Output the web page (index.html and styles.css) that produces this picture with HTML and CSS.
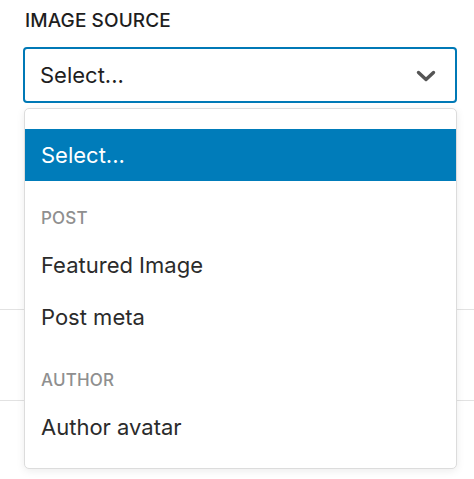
FILE: index.html
```html
<!DOCTYPE html>
<html>
<head>
<meta charset="utf-8">
<link rel="stylesheet" href="styles.css">
</head>
<body>
<div class="panel">
  <section class="panel-body first">
    <div class="field-label">IMAGE SOURCE</div>
    <div class="select-wrap">
      <div class="select">
        <span class="select-value">Select...</span>
        <svg class="chevron" width="20" height="12" viewBox="0 0 20 12" aria-hidden="true">
          <path d="M2.5 2.5 L10 9.5 L17.5 2.5" fill="none" stroke="#555" stroke-width="3.4" stroke-linecap="round" stroke-linejoin="round"/>
        </svg>
      </div>
      <div class="menu">
        <div class="option selected">Select...</div>
        <div class="group-label">POST</div>
        <div class="option">Featured Image</div>
        <div class="option">Post meta</div>
        <div class="group-label">AUTHOR</div>
        <div class="option">Author avatar</div>
      </div>
    </div>
  </section>
  <section class="panel-body second"></section>
  <section class="panel-body third"></section>
</div>
</body>
</html>
```

FILE: styles.css
```css
html, body {
  margin: 0;
  padding: 0;
  background: #ffffff;
}
body {
  font-family: Inter, "Noto Sans", "Liberation Sans", sans-serif;
  color: #1e1e1e;
}
.panel {
  width: 474px;
}
.panel-body {
  border-bottom: 1px solid #e2e2e2;
}
.first {
  height: 310px;
  box-sizing: border-box;
  padding: 9px 17px 0 23px;
}
.second {
  height: 90px;
}
.third {
  height: 78px;
  border-bottom: none;
}
.field-label {
  font-size: 19px;
  font-weight: 500;
  line-height: 24px;
  padding-left: 2px;
  letter-spacing: 0.1px;
  color: #1e1e1e;
}
.select-wrap {
  position: relative;
  margin-top: 14px;
}
.select {
  height: 56px;
  box-sizing: border-box;
  border: 2px solid #0079b6;
  border-radius: 4px;
  display: flex;
  align-items: center;
  justify-content: space-between;
  padding: 0 19px 0 15px;
}
.select-value {
  font-size: 22px;
  color: #1e1e1e;
}
.chevron {
  display: block;
  margin-top: 1px;
}
.menu {
  position: absolute;
  top: 61px;
  left: 1px;
  right: 0;
  background: #fff;
  border: 1px solid #dcdcdc;
  border-radius: 5px;
  box-shadow: 0 2px 8px rgba(0, 0, 0, 0.08);
  padding: 20px 0 15px;
}
.option {
  height: 52px;
  display: flex;
  align-items: center;
  padding-left: 16px;
  font-size: 22px;
  color: #2b2b2b;
}
.option.selected {
  background: #007cba;
  color: #ffffff;
}
.group-label {
  height: 58px;
  box-sizing: border-box;
  padding: 26px 0 0 16px;
  line-height: 22px;
  font-size: 17px;
  font-weight: 500;
  color: #8f8f8f;
  letter-spacing: 0.2px;
}
```
